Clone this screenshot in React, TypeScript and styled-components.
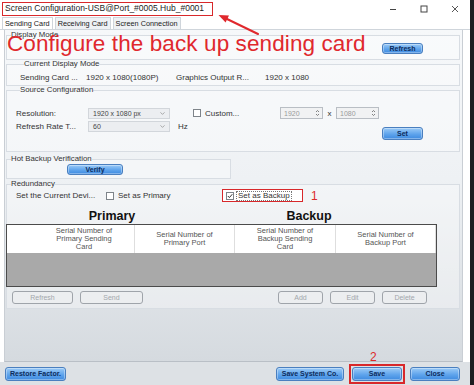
import styled, { createGlobalStyle } from "styled-components";
import { ChevronDown } from "lucide-react";

const GlobalStyle = createGlobalStyle`
  html, body { margin: 0; padding: 0; background: #fff; }
  body { font-family: "Liberation Sans", Arial, sans-serif; }
  * { box-sizing: border-box; }
`;

const Window = styled.div`
  position: relative;
  width: 474px;
  height: 385px;
  display: flex;
  flex-direction: column;
  background: #fff;
  border-right: 4px solid #1c1e21;
  overflow: hidden;
`;

const TitleBar = styled.div`
  height: 17px;
  display: flex;
  align-items: center;
  justify-content: space-between;
  padding-left: 2px;
`;

const Title = styled.div`
  width: 211px;
  height: 14px;
  padding-left: 2px;
  border: 1.5px solid #d8282b;
  font-size: 8.5px;
  line-height: 11px;
  color: #1e1e1e;
  white-space: nowrap;
`;

const Controls = styled.div`
  display: flex;
`;

const Control = styled.div`
  width: 31px;
  height: 17px;
  display: flex;
  align-items: center;
  justify-content: center;
`;

const TabBar = styled.div`
  height: 13px;
  display: flex;
  align-items: flex-end;
  padding-left: 2px;
  gap: 2px;
  border-bottom: 1px solid #cfd5db;
`;

const Tab = styled.div<{ $active?: boolean }>`
  height: 12px;
  padding: 0 2px;
  font-size: 7.3px;
  line-height: 11px;
  color: #222;
  background: ${(p) => (p.$active ? "#fff" : "#eef1f4")};
  border: 1px solid #cfd5db;
  border-bottom: none;
`;

const Body = styled.div`
  flex: 1;
  margin: 0 7px 0 4px;
  padding: 1px 2px 0 1px;
  display: flex;
  flex-direction: column;
  border-left: 1px solid #c9ced4;
  border-right: 1px solid #c9ced4;
  border-bottom: 1px solid #b9bfc6;
  background: linear-gradient(#f6f8fa, #eef1f4 45%, #d5dadf);
`;

const Group = styled.fieldset<{ $w?: number; $pad?: string; $mt?: number }>`
  margin: ${(p) => p.$mt ?? 0}px 0 0 0;
  padding: ${(p) => p.$pad ?? "0"};
  min-width: 0;
  width: ${(p) => (p.$w ? `${p.$w}px` : "auto")};
  border: 1px solid #d8dde3;
  background: rgba(255, 255, 255, 0.35);
  font-size: 8px;
`;

const Legend = styled.legend`
  padding: 0;
  margin-left: 4px;
  font-size: 7.8px;
  line-height: 8px;
  color: #333;
`;

const Row = styled.div<{ $h?: number; $pl?: number }>`
  display: flex;
  align-items: center;
  height: ${(p) => p.$h ?? 12}px;
  padding-left: ${(p) => p.$pl ?? 0}px;
  font-size: 8px;
  color: #333;
`;

const Cell = styled.div<{ $w: number }>`
  width: ${(p) => p.$w}px;
  flex-shrink: 0;
  white-space: nowrap;
`;

const Select = styled.div`
  width: 82px;
  height: 11px;
  display: flex;
  align-items: center;
  justify-content: space-between;
  padding: 0 3px 0 4px;
  background: #eceef1;
  border: 1px solid #d2d6db;
  font-size: 7px;
  color: #444;
`;

const Spin = styled.div`
  width: 43px;
  height: 12px;
  display: flex;
  align-items: center;
  justify-content: space-between;
  padding: 0 2px 0 3px;
  background: #f1f2f3;
  border: 1px solid #b9bec4;
  font-size: 7px;
  color: #9a9a9a;
`;

const Box = styled.div`
  width: 8px;
  height: 8px;
  flex-shrink: 0;
  border: 1px solid #7e848a;
  background: #fff;
  display: flex;
  align-items: center;
  justify-content: center;
`;

const BlueButton = styled.button<{ $w: number; $h?: number }>`
  display: block;
  width: ${(p) => p.$w}px;
  height: ${(p) => p.$h ?? 11}px;
  padding: 0;
  font-family: inherit;
  font-size: 7px;
  font-weight: bold;
  color: #0d2c5c;
  background: linear-gradient(#9ccbf7, #5fa4ec 55%, #3d8ae0);
  border: 1px solid #4a7fbf;
  border-radius: 3px;
  box-shadow: inset 0 0 0 1px rgba(255, 255, 255, 0.35);
  white-space: nowrap;
  overflow: hidden;
`;

const GrayButton = styled.button<{ $w: number }>`
  display: block;
  width: ${(p) => p.$w}px;
  height: 13px;
  padding: 0;
  font-family: inherit;
  font-size: 7px;
  color: #a2a7ac;
  background: #eceef0;
  border: 1px solid #9fa4aa;
  border-radius: 3px;
`;

const MarkBox = styled.div`
  width: 81px;
  height: 13px;
  display: flex;
  align-items: center;
  gap: 2px;
  padding: 0 2px 0 3px;
  border: 1.5px solid #d8282b;
  background: #fff;
`;

const Focus = styled.span`
  padding: 0 1px;
  line-height: 8px;
  border: 1px dotted #777;
  white-space: nowrap;
`;

const Mark = styled.span<{ $size: number }>`
  color: #dc2a2a;
  font-size: ${(p) => p.$size}px;
  line-height: 1;
`;

const Heads = styled.div`
  display: flex;
  height: 21px;
  align-items: flex-end;
  padding-bottom: 1px;
  font-size: 12.5px;
  font-weight: bold;
  color: #111;
`;

const Head = styled.div<{ $w: number }>`
  width: ${(p) => p.$w}px;
  text-align: center;
`;

const Table = styled.div`
  width: 431px;
  margin-left: -1px;
  border: 1px solid #4b4b4b;
  display: grid;
  grid-template-columns: 27px 101px 100px 101px 100px;
  grid-template-rows: 28px 33px;
`;

const Th = styled.div`
  background: #fff;
  border-right: 1px solid #dedede;
  display: flex;
  align-items: center;
  justify-content: center;
  text-align: center;
  padding: 0 16px;
  font-size: 7.5px;
  line-height: 8px;
  color: #555;
  &:last-child { border-right: none; }
`;

const TableBody = styled.div`
  grid-column: 1 / -1;
  background: #a9a9a9;
`;

const ButtonRow = styled.div`
  display: flex;
  align-items: center;
  margin-top: 3px;
  height: 14px;
  padding-left: 5px;
  gap: 7px;
`;

const Spacer = styled.div`
  flex: 1;
`;

const Footer = styled.div`
  height: 23px;
  display: flex;
  align-items: center;
  padding: 0 10px 0 5px;
  gap: 8px;
  background: #dde1e5;
`;

const SaveWrap = styled.div`
  position: relative;
  outline: 2px solid #d8282b;
  outline-offset: 1px;
`;

const StepTwo = styled.span`
  position: absolute;
  left: 18px;
  top: -17px;
  color: #dc2a2a;
  font-size: 12px;
`;

const Callout = styled.div`
  position: absolute;
  left: 7px;
  top: 31px;
  font-size: 22.5px;
  color: #e0282d;
  white-space: nowrap;
  letter-spacing: 0.1px;
`;

const Arrow = styled.svg`
  position: absolute;
  left: 0;
  top: 0;
  pointer-events: none;
`;

const SpinArrows = () => (
  <svg width="5" height="8" viewBox="0 0 5 8">
    <path d="M1 3 L2.5 1.5 L4 3 M1 5 L2.5 6.5 L4 5" fill="none" stroke="#666" strokeWidth="0.8" />
  </svg>
);

const Check = () => (
  <svg width="6" height="6" viewBox="0 0 6 6">
    <path d="M0.8 3 L2.4 4.6 L5.3 1.2" fill="none" stroke="#333" strokeWidth="1" />
  </svg>
);

export default function App() {
  return (
    <>
      <GlobalStyle />
      <Window>
        <TitleBar>
          <Title>Screen Configuration-USB@Port_#0005.Hub_#0001</Title>
          <Controls>
            <Control>
              <svg width="8" height="8" viewBox="0 0 8 8"><path d="M1 4.5 H7" stroke="#444" strokeWidth="1" /></svg>
            </Control>
            <Control>
              <svg width="8" height="8" viewBox="0 0 8 8"><rect x="1" y="1" width="6" height="6" fill="none" stroke="#444" strokeWidth="1" /></svg>
            </Control>
            <Control>
              <svg width="8" height="8" viewBox="0 0 8 8"><path d="M1 1 L7 7 M7 1 L1 7" stroke="#444" strokeWidth="0.9" /></svg>
            </Control>
          </Controls>
        </TitleBar>

        <TabBar>
          <Tab $active>Sending Card</Tab>
          <Tab>Receiving Card</Tab>
          <Tab>Screen Connection</Tab>
        </TabBar>

        <Body>
          <Group $pad="3px 36px 5px 0">
            <Legend>Display Mode</Legend>
            <Row $h={12} style={{ justifyContent: "flex-end" }}>
              <BlueButton $w={41}>Refresh</BlueButton>
            </Row>
          </Group>

          <Group $pad="3px 0 2px 13px">
            <Legend>Current Display Mode</Legend>
            <Row>
              <Cell $w={66}>Sending Card ...</Cell>
              <Cell $w={90}>1920 x 1080(1080P)</Cell>
              <Cell $w={89}>Graphics Output R...</Cell>
              <Cell $w={80}>1920 x 1080</Cell>
            </Row>
          </Group>

          <Group $pad="13px 36px 10px 9px">
            <Legend>Source Configuration</Legend>
            <Row $h={12}>
              <Cell $w={72}>Resolution:</Cell>
              <Select>
                1920 x 1080 px
                <ChevronDown size={7} color="#777" />
              </Select>
              <Box style={{ marginLeft: 23 }} />
              <Cell $w={75} style={{ marginLeft: 4 }}>Custom...</Cell>
              <Spin>
                1920
                <SpinArrows />
              </Spin>
              <Cell $w={13} style={{ textAlign: "center" }}>x</Cell>
              <Spin>
                1080
                <SpinArrows />
              </Spin>
            </Row>
            <Row $h={20} style={{ alignItems: "flex-start", marginTop: 2 }}>
              <Cell $w={72} style={{ lineHeight: "11px" }}>Refresh Rate T...</Cell>
              <Select>
                60
                <ChevronDown size={7} color="#777" />
              </Select>
              <Cell $w={20} style={{ marginLeft: 8, lineHeight: "11px" }}>Hz</Cell>
              <Spacer />
              <BlueButton $w={41} $h={13} style={{ marginTop: 6 }}>Set</BlueButton>
            </Row>
          </Group>

          <Group $w={225} $mt={3} $pad="0 0 3px 0">
            <Legend>Hot Backup Verification</Legend>
            <Row $pl={60}>
              <BlueButton $w={56}>Verify</BlueButton>
            </Row>
          </Group>

          <Group $mt={1} $pad="0 0 4px 0">
            <Legend>Redundancy</Legend>
            <Row $h={15} $pl={9}>
              <Cell $w={90}>Set the Current Devi...</Cell>
              <Box />
              <Cell $w={104} style={{ marginLeft: 4 }}>Set as Primary</Cell>
              <MarkBox>
                <Box><Check /></Box>
                <Focus>Set as Backup</Focus>
              </MarkBox>
              <Mark $size={12} style={{ marginLeft: 8 }}>1</Mark>
            </Row>
            <Heads>
              <Head $w={210}>Primary</Head>
              <Head $w={184}>Backup</Head>
            </Heads>
            <Table>
              <Th />
              <Th>Serial Number of Primary Sending Card</Th>
              <Th>Serial Number of Primary Port</Th>
              <Th>Serial Number of Backup Sending Card</Th>
              <Th>Serial Number of Backup Port</Th>
              <TableBody />
            </Table>
            <ButtonRow>
              <GrayButton $w={61}>Refresh</GrayButton>
              <GrayButton $w={63}>Send</GrayButton>
              <Spacer />
              <GrayButton $w={45}>Add</GrayButton>
              <GrayButton $w={45}>Edit</GrayButton>
              <GrayButton $w={45} style={{ marginRight: 32 }}>Delete</GrayButton>
            </ButtonRow>
          </Group>
        </Body>

        <Footer>
          <BlueButton $w={61} $h={14}>Restore Factor.</BlueButton>
          <Spacer />
          <BlueButton $w={68} $h={14}>Save System Co.</BlueButton>
          <SaveWrap>
            <StepTwo>2</StepTwo>
            <BlueButton $w={50} $h={14}>Save</BlueButton>
          </SaveWrap>
          <BlueButton $w={50} $h={14}>Close</BlueButton>
        </Footer>

        <Callout>Configure the back up sending card</Callout>
        <Arrow width="474" height="40" viewBox="0 0 474 40">
          <path d="M258 34 L226 18.5" stroke="#e0282d" strokeWidth="2" strokeLinecap="round" />
          <polygon points="218.5,15 225.6,22.4 229,15.4" fill="#e0282d" />
        </Arrow>
      </Window>
    </>
  );
}
